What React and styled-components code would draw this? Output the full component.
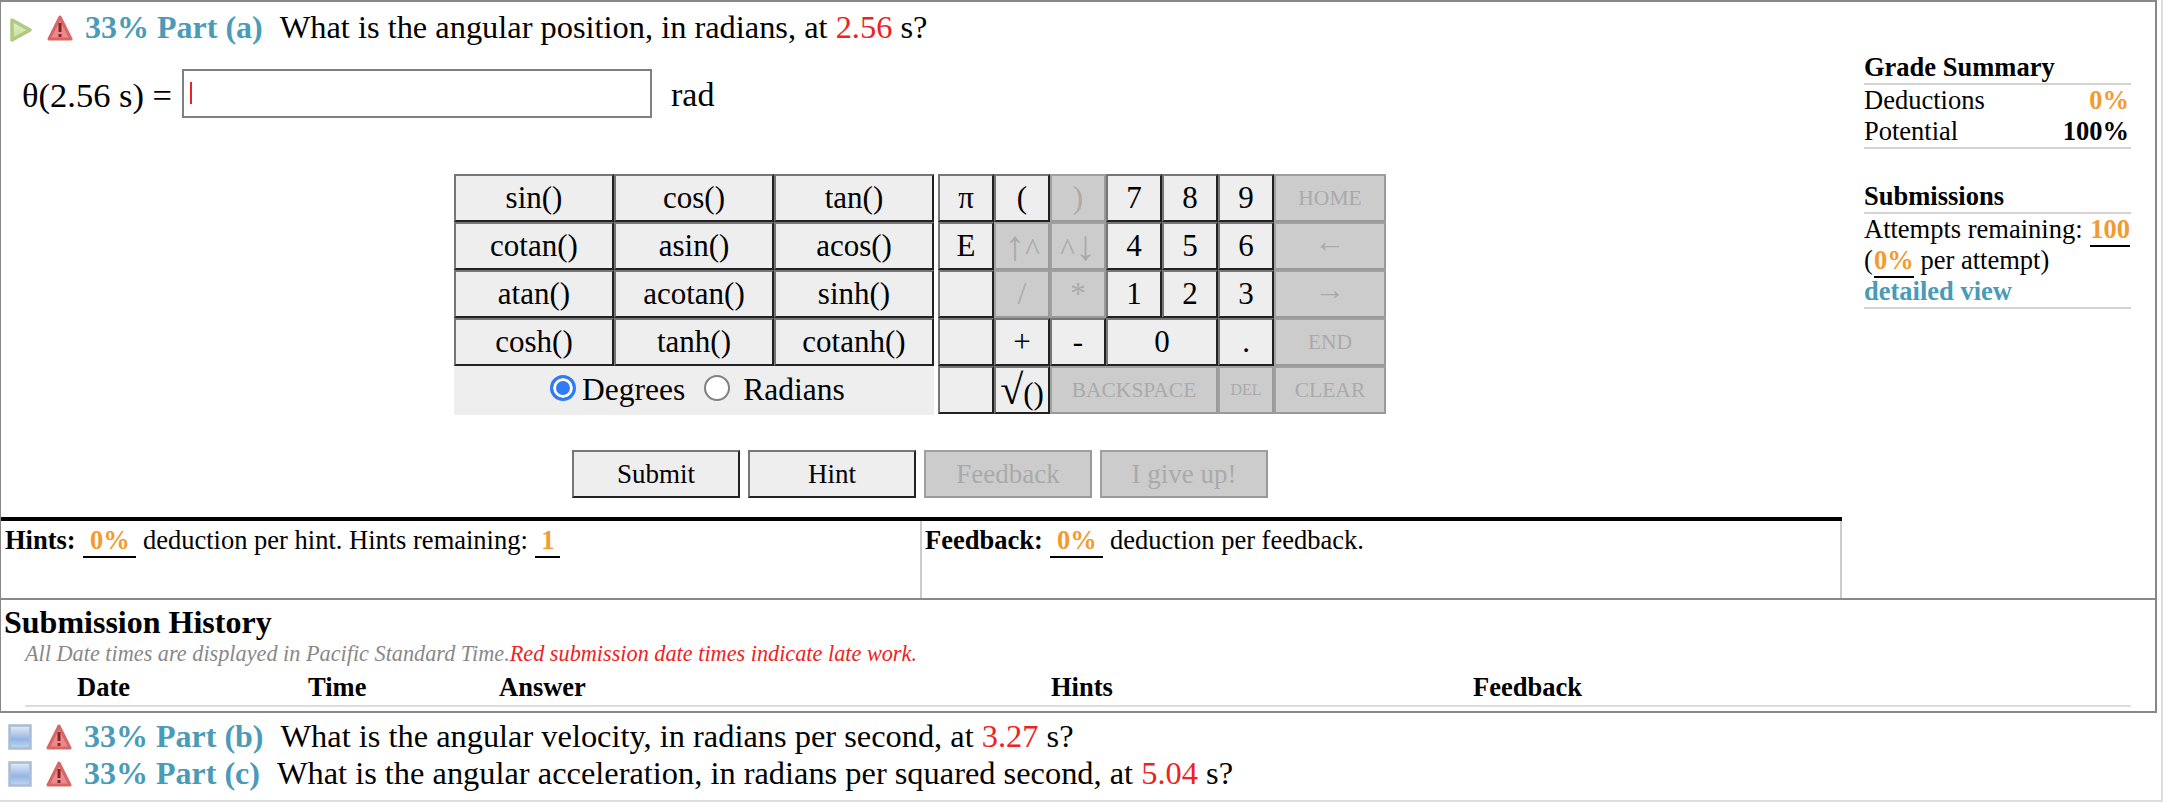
import styled, { createGlobalStyle } from 'styled-components';

const GlobalStyle = createGlobalStyle`
  html, body {
    margin: 0;
    padding: 0;
    background: #fff;
    color: #000;
    font-family: "Liberation Serif", "Times New Roman", serif;
  }
`

const functionKeys = [
  'sin()', 'cos()', 'tan()',
  'cotan()', 'asin()', 'acos()',
  'atan()', 'acotan()', 'sinh()',
  'cosh()', 'tanh()', 'cotanh()',
];

const symbolKeys = [
  { label: 'π' }, { label: '(' }, { label: ')', off: true }, { label: '7' }, { label: '8' }, { label: '9' }, { label: 'HOME', off: true, small: true },
  { label: 'E' }, { tall: '↑', after: '^', off: true }, { label: '^', tall: '↓', off: true }, { label: '4' }, { label: '5' }, { label: '6' }, { label: '←', off: true, lift: true },
  { label: '' }, { label: '/', off: true }, { label: '*', off: true }, { label: '1' }, { label: '2' }, { label: '3' }, { label: '→', off: true, lift: true },
  { label: '' }, { label: '+' }, { label: '-' }, { label: '0', span: 2 }, { label: '.' }, { label: 'END', off: true, small: true },
  { label: '' }, { tall: '√', after: '()' }, { label: 'BACKSPACE', off: true, small: true, span: 3 }, { label: 'DEL', off: true, tiny: true }, { label: 'CLEAR', off: true, small: true },
];

const PlayIcon = () => (
  <IconSvg width="24" height="30" viewBox="0 0 24 30">
    <defs>
      <linearGradient id="playFill" x1="0" y1="0" x2="0" y2="1">
        <stop offset="0" stopColor="#e6efc8" />
        <stop offset="1" stopColor="#c6de98" />
      </linearGradient>
    </defs>
    <path d="M3 8 L21 18 L3 28 Z" fill="url(#playFill)" stroke="#b0ca84" strokeWidth="3.5" strokeLinejoin="round" />
  </IconSvg>
);

const WarnIcon = () => (
  <IconSvg width="26" height="27" viewBox="0 0 26 27">
    <path d="M13 3 L24 25 L2 25 Z" fill="#ea8a8a" stroke="#d96666" strokeWidth="3" strokeLinejoin="round" />
    <path d="M13 9 L13 18" stroke="#852424" strokeWidth="3" />
    <rect x="11.5" y="20" width="3" height="3" fill="#852424" />
  </IconSvg>
);

const BoxIcon = () => (
  <IconSvg width="24" height="26" viewBox="0 0 24 26">
    <defs>
      <linearGradient id="boxFill" x1="0" y1="0" x2="0" y2="1">
        <stop offset="0" stopColor="#e6edf6" />
        <stop offset="0.6" stopColor="#94b6e4" />
        <stop offset="1" stopColor="#c3d6ee" />
      </linearGradient>
    </defs>
    <rect x="1.5" y="1.5" width="21" height="23" fill="url(#boxFill)" stroke="#a8bcd4" strokeWidth="2.5" />
  </IconSvg>
);

const CollapsedPart = ({ letter, question, at, unit }) => (
  <PartRow>
    <BoxIcon />
    <WarnIcon />
    <PartLabel>33% Part ({letter})</PartLabel>
    <Question>{question}, at <Red>{at}</Red> {unit}?</Question>
  </PartRow>
);

const App = () => {
  return (
    <Page>
      <GlobalStyle />
      <Frame>
        <Panel>
          <Main>
            <PartHead>
              <PlayIcon />
              <WarnIcon />
              <PartLabel>33% Part (a)</PartLabel>
              <Question>What is the angular position, in radians, at <Red>2.56</Red> s?</Question>
            </PartHead>
            <AnswerRow>
              <AnswerLabel>θ(2.56 s) =</AnswerLabel>
              <AnswerBox><Caret /></AnswerBox>
              <AnswerUnit>rad</AnswerUnit>
            </AnswerRow>
            <Keypad>
              <FunctionPad>
                {functionKeys.map((key) => <FunctionKey key={key} type="button">{key}</FunctionKey>)}
                <AngleMode>
                  <Radio type="radio" name="mode" defaultChecked />
                  <ModeText>Degrees</ModeText>
                  <Radio type="radio" name="mode" />
                  <ModeText $wide>Radians</ModeText>
                </AngleMode>
              </FunctionPad>
              <SymbolPad>
                {symbolKeys.map((key, i) => (
                  <SymbolKey key={i} type="button" $off={key.off} $small={key.small} $tiny={key.tiny} $span={key.span} $lift={key.lift}>
                    {key.label}
                    {key.tall && <TallGlyph>{key.tall}</TallGlyph>}
                    {key.after}
                  </SymbolKey>
                ))}
              </SymbolPad>
            </Keypad>
            <Actions>
              <ActionButton type="button">Submit</ActionButton>
              <ActionButton type="button">Hint</ActionButton>
              <ActionButton type="button" $off>Feedback</ActionButton>
              <ActionButton type="button" $off>I give up!</ActionButton>
            </Actions>
            <Notes>
              <Note>
                <b>Hints:</b> <Value $w={53}>0%</Value> deduction per hint. Hints remaining: <Value $w={25}>1</Value>
              </Note>
              <Note $divided>
                <b>Feedback:</b> <Value $w={53}>0%</Value> deduction per feedback.
              </Note>
            </Notes>
          </Main>
          <Sidebar>
            <SideHead>Grade Summary</SideHead>
            <SideRow><span>Deductions</span><Orange>0%</Orange></SideRow>
            <SideRow $last><span>Potential</span><b>100%</b></SideRow>
            <SideHead $spaced>Submissions</SideHead>
            <SideLine>Attempts remaining: <Value $w={40}>100</Value></SideLine>
            <SideLine>(<Value $w={40}>0%</Value> per attempt)</SideLine>
            <DetailLink>detailed view</DetailLink>
          </Sidebar>
        </Panel>
        <History>
          <HistoryTitle>Submission History</HistoryTitle>
          <HistoryNote>All Date times are displayed in Pacific Standard Time.<Red>Red submission date times indicate late work.</Red></HistoryNote>
          <HistoryHead>
            <span>Date</span>
            <span>Time</span>
            <span>Answer</span>
            <span>Hints</span>
            <span>Feedback</span>
          </HistoryHead>
        </History>
      </Frame>
      <CollapsedParts>
        <CollapsedPart letter="b" question="What is the angular velocity, in radians per second" at="3.27" unit="s" />
        <CollapsedPart letter="c" question="What is the angular acceleration, in radians per squared second" at="5.04" unit="s" />
      </CollapsedParts>
    </Page>
  );
};

export default App;

const Page = styled.div`
  width: 2163px;
  height: 802px;
  overflow: hidden;
  box-sizing: border-box;
  border-right: 2px solid #ddd;
  border-bottom: 2px solid #ddd;
`

const IconSvg = styled.svg`
  display: block;
  flex: none;
  margin-right: 14px;
  filter: blur(0.5px);
`

const Frame = styled.div`
  width: 2157px;
  height: 713px;
  box-sizing: border-box;
  border: 2px solid #888;
  border-left-width: 1px;
  display: flex;
  flex-direction: column;
`

const Panel = styled.div`
  display: flex;
  height: 596px;
  flex: none;
`

const Main = styled.div`
  width: 1841px;
  flex: none;
  display: flex;
  flex-direction: column;
`

const PartHead = styled.div`
  display: flex;
  align-items: center;
  height: 50px;
  padding-left: 8px;
`

const PartRow = styled.div`
  display: flex;
  align-items: center;
  height: 37px;
  padding-left: 8px;
`

const PartLabel = styled.span`
  font-size: 32px;
  font-weight: bold;
  color: #4a9bb8;
  white-space: nowrap;
  margin-left: -2px;
`

const Question = styled.span`
  font-size: 32.4px;
  white-space: nowrap;
  margin-left: 17px;
`

const Red = styled.span`
  color: #ee2222;
`

const AnswerRow = styled.div`
  display: flex;
  align-items: center;
  height: 50px;
  margin-top: 16px;
  padding-left: 21px;
`

const AnswerLabel = styled.span`
  font-size: 34.5px;
  width: 160px;
  flex: none;
  white-space: nowrap;
  margin-top: 4px;
`

const AnswerBox = styled.div`
  width: 470px;
  height: 49px;
  box-sizing: border-box;
  border: 2px solid #808080;
  display: flex;
  align-items: center;
  padding-left: 6px;
`

const Caret = styled.span`
  width: 2px;
  height: 22px;
  background: #ee2222;
`

const AnswerUnit = styled.span`
  font-size: 34px;
  margin: 4px 0 0 19px;
`

const Keypad = styled.div`
  display: flex;
  gap: 4px;
  margin: 56px 0 0 453px;
`

const FunctionPad = styled.div`
  display: grid;
  grid-template-columns: repeat(3, 160px);
  grid-auto-rows: 48px;
`

const keyBox = `
  box-sizing: border-box;
  margin: 0;
  padding: 0;
  border-style: solid;
  border-width: 2px;
  font-family: "Liberation Serif", "Times New Roman", serif;
  white-space: nowrap;
  overflow: hidden;
`

const FunctionKey = styled.button`
  ${keyBox}
  font-size: 31px;
  color: #000;
  background: #eee;
  border-color: #767676 #222 #222 #767676;
`

const AngleMode = styled.div`
  grid-column: 1 / span 3;
  background: #eee;
  height: 49px;
  box-sizing: border-box;
  display: flex;
  align-items: center;
  padding: 0 0 2px 96px;
`

const Radio = styled.input`
  appearance: none;
  box-sizing: border-box;
  width: 26px;
  height: 26px;
  margin: 0 0 4px;
  background: #fff;
  border: 2px solid #808080;
  border-radius: 50%;
  flex: none;

  &:checked {
    border: 3px solid #2f7bf5;
    background: #2f7bf5;
    box-shadow: inset 0 0 0 3px #fff;
  }
`

const ModeText = styled.span`
  font-size: 31.5px;
  margin: ${(p) => (p.$wide ? '0 0 0 13px' : '0 19px 0 6px')};
`

const SymbolPad = styled.div`
  display: grid;
  grid-template-columns: repeat(6, 56px) 112px;
  grid-auto-rows: 48px;
`

const SymbolKey = styled.button`
  ${keyBox}
  grid-column: span ${(p) => p.$span || 1};
  padding-bottom: ${(p) => (p.$lift ? '8px' : '0')};
  font-size: ${(p) => (p.$tiny ? '16px' : p.$small ? '21.5px' : '31px')};
  color: ${(p) => (p.$off ? '#aaa' : '#000')};
  background: ${(p) => (p.$off ? '#ccc' : '#eee')};
  border-color: ${(p) => (p.$off ? '#a0a0a0 #999 #999 #a0a0a0' : '#767676 #222 #222 #767676')};
`

const TallGlyph = styled.span`
  font-size: 42px;
  line-height: 1;
`

const Actions = styled.div`
  display: flex;
  gap: 8px;
  margin: 36px 0 0 571px;
`

const ActionButton = styled.button`
  ${keyBox}
  width: 168px;
  height: 48px;
  font-size: 27px;
  color: ${(p) => (p.$off ? '#aaa' : '#000')};
  background: ${(p) => (p.$off ? '#ccc' : '#eee')};
  border-color: ${(p) => (p.$off ? '#a0a0a0 #999 #999 #a0a0a0' : '#767676 #222 #222 #767676')};
`

const Notes = styled.div`
  display: grid;
  grid-template-columns: 919px 1fr;
  border-top: 4px solid #000;
  margin-top: 19px;
  flex: 1;
`

const Note = styled.div`
  font-size: 26.5px;
  line-height: 38px;
  padding-left: ${(p) => (p.$divided ? '3px' : '4px')};
  border-left: ${(p) => (p.$divided ? '2px solid #ccc' : 'none')};
  border-right: ${(p) => (p.$divided ? '2px solid #ccc' : 'none')};
  white-space: nowrap;
`

const Value = styled.span`
  display: inline-block;
  width: ${(p) => p.$w}px;
  margin-left: 1px;
  padding-bottom: 1px;
  line-height: 30px;
  text-align: center;
  font-weight: bold;
  color: #f29b30;
  border-bottom: 2px solid #000;
`

const Orange = styled.b`
  color: #f29b30;
`

const Sidebar = styled.div`
  width: 267px;
  margin: 49px 0 0 22px;
  font-size: 26.5px;
  line-height: 31px;
`

const SideHead = styled.div`
  font-weight: bold;
  height: 31px;
  padding-top: 1px;
  border-bottom: 2px solid #d4d4d4;
  margin-top: ${(p) => (p.$spaced ? '31px' : '0')};
`

const SideRow = styled.div`
  display: flex;
  justify-content: space-between;
  padding-right: 2px;
  border-bottom: ${(p) => (p.$last ? '2px solid #d4d4d4' : 'none')};
`

const SideLine = styled.div`
  height: 31px;
  white-space: nowrap;
`

const DetailLink = styled.div`
  font-weight: bold;
  color: #4a9bb8;
  border-bottom: 2px solid #d4d4d4;
`

const History = styled.div`
  flex: 1;
  border-top: 2px solid #888;
  padding-left: 3px;
`

const HistoryTitle = styled.div`
  font-size: 32px;
  font-weight: bold;
  line-height: 40px;
  padding-top: 2px;
`

const HistoryNote = styled.div`
  font-size: 22.25px;
  font-style: italic;
  color: #888;
  line-height: 24px;
  padding-left: 21px;
  white-space: nowrap;
`

const HistoryHead = styled.div`
  display: grid;
  grid-template-columns: 231px 191px 552px 422px 1fr;
  margin: 4px 24px 0 21px;
  padding: 0 0 1px 52px;
  font-size: 26.5px;
  font-weight: bold;
  line-height: 34px;
  border-bottom: 2px solid #ddd;
`

const CollapsedParts = styled.div`
  display: flex;
  flex-direction: column;
  padding-top: 5px;
`
